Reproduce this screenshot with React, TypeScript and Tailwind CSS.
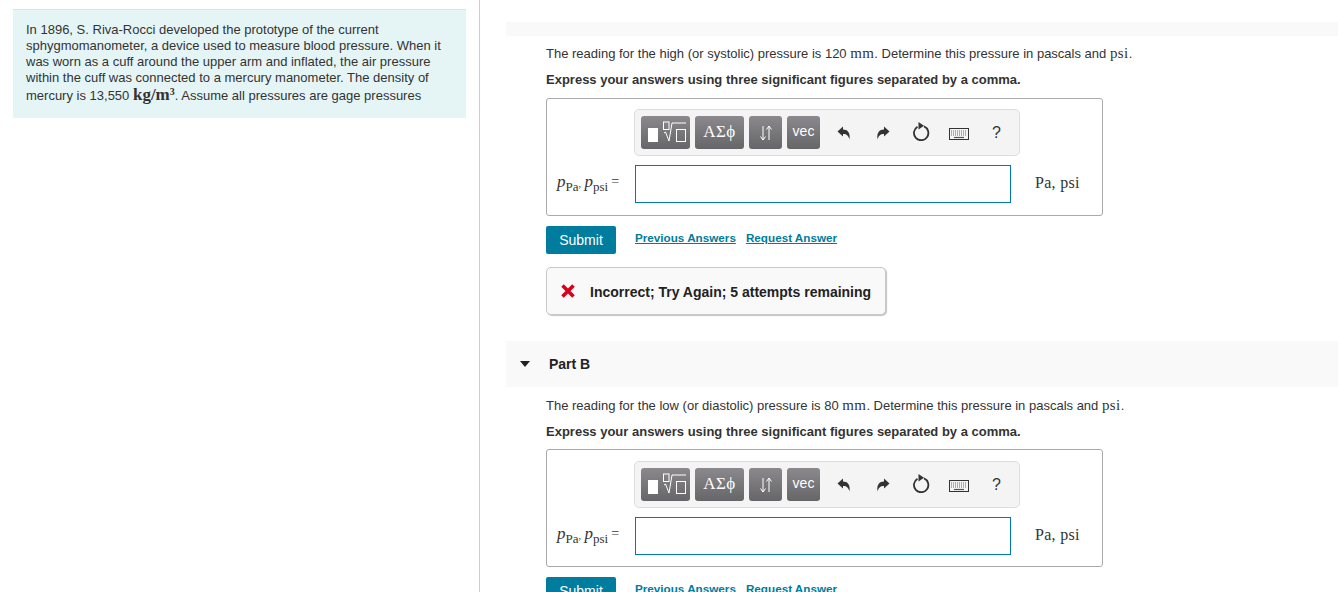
const Toolbar = () => (
  <div className="ml-[87px] w-[386px] h-[47px] bg-[#f4f4f4] border border-[#dddddd] rounded-[5px] flex items-center pl-[6px]">
    <div className="flex gap-[5px]">
      <div className="w-[49px] h-[33px] rounded-[3px] bg-gradient-to-b from-[#8b898d] to-[#666567] relative">
        <span className="absolute left-[7px] top-[12px] w-[10px] h-[14px] bg-white" />
        <svg className="absolute left-[22px] top-[5px]" width="24" height="24" viewBox="0 0 24 24" fill="none" stroke="#ffffff" strokeWidth="1">
          <rect x="0.5" y="1" width="5.5" height="7.5" />
          <path d="M1 12l1.5 -1 3.5 9 3 -18H23" />
          <rect x="13.5" y="8.5" width="9" height="12" />
        </svg>
      </div>
      <div className="w-[49px] h-[33px] rounded-[3px] bg-gradient-to-b from-[#8b898d] to-[#666567] flex items-center justify-center text-white text-[17px] tracking-[0.5px] font-['Liberation_Serif',serif] pb-[2px]">
        ΑΣϕ
      </div>
      <div className="w-[33px] h-[33px] rounded-[3px] bg-gradient-to-b from-[#8b898d] to-[#666567] flex items-center justify-center">
        <svg width="14" height="18" viewBox="0 0 14 18" fill="none" stroke="#ffffff" strokeWidth="1">
          <path d="M4 2v14M1.5 12.5l2.5 3.5 2.5-3.5" />
          <path d="M10 16V2M7.5 5.5l2.5-3.5 2.5 3.5" />
        </svg>
      </div>
      <div className="w-[33px] h-[33px] rounded-[3px] bg-gradient-to-b from-[#8b898d] to-[#666567] flex items-center justify-center text-white text-[14px] pb-[3px]">
        vec
      </div>
    </div>
    <svg className="ml-[17px]" width="14" height="14" viewBox="0 0 14 14" fill="#333333">
      <path d="M0.5 5.5L6 0.5V3.5C10.5 3.5 13.5 6.5 12.5 13.5C11.5 10 10 8 6 8V10.5Z" />
    </svg>
    <svg className="ml-[25px]" width="14" height="14" viewBox="0 0 14 14" fill="#333333">
      <path d="M13.5 5.5L8 0.5V3.5C3.5 3.5 0.5 6.5 1.5 13.5C2.5 10 4 8 8 8V10.5Z" />
    </svg>
    <svg className="ml-[22px] -mt-[3px]" width="18" height="20" viewBox="0 0 18 20" fill="none" stroke="#333333" strokeWidth="1.8">
      <path d="M5.5 5.8A7.2 7.2 0 1 0 12 5.4" />
      <path d="M6.5 1L12 4.8 6.5 8.5Z" fill="#333333" stroke="none" />
    </svg>
    <svg className="ml-[19px] mt-[2px]" width="20" height="12" viewBox="0 0 20 12" fill="none">
      <rect x="0.5" y="0.5" width="19" height="11" fill="#f4f4f4" stroke="#333333" />
      <path d="M2 3h16M2 5h16M2 7h16" stroke="#666666" strokeWidth="1" strokeDasharray="1 1" />
      <path d="M5 9.5h10" stroke="#555555" strokeWidth="1.2" />
    </svg>
    <span className="ml-[23px] text-[#333333] text-[16px]">?</span>
  </div>
);

const AnswerBox = ({ top }: { top: string }) => (
  <div className={`ml-[40px] w-[557px] h-[118px] border border-[#aaaaaa] rounded-[3px] ${top}`}>
    <Toolbar />
    <div className="flex items-center mt-[9px]">
      <div className="w-[88px] pl-[10px] text-[14px] font-['Liberation_Serif',serif] text-[#333333] whitespace-nowrap relative -top-[2px]">
        <i className="text-[17px]">p</i>
        <sub className="text-[13px]">Pa</sub>
        <span className="text-[10px] mr-[1px]">, </span>
        <i className="text-[17px]">p</i>
        <sub className="text-[13px]">psi</sub>
        <span className="ml-[3px] relative -top-[1px]">=</span>
      </div>
      <div className="w-[376px] h-[38px] border border-[#007c9e]" />
      <span className="ml-[24px] text-[16px] tracking-[0.3px] font-['Liberation_Serif',serif] text-[#333333] relative -top-[1px]">Pa, psi</span>
    </div>
  </div>
);

const Actions = () => (
  <div className="flex items-center ml-[40px]">
    <button className="w-[70px] h-[28px] bg-[#007c9e] text-white text-[14px] rounded-[2px]">Submit</button>
    <a className="ml-[19px] text-[11.7px] font-bold text-[#007c9e] underline relative -top-[2px]">Previous Answers</a>
    <a className="ml-[10px] text-[11.7px] font-bold text-[#007c9e] underline relative -top-[2px]">Request Answer</a>
  </div>
);

const MathText = ({ children }: { children: string }) => (
  <span className="font-['Liberation_Serif',serif] text-[15px] tracking-[0.4px]">{children}</span>
);

export default function App() {
  return (
    <div className="w-[1338px] h-[592px] overflow-hidden flex bg-white font-['Liberation_Sans',Arial,sans-serif] text-[#333333]">
      <div className="w-[480px] shrink-0 h-full border-r border-[#c9ced9] pt-[9px] pl-[13px]">
        <div className="w-[453px] h-[109px] bg-[#e5f5f6] border-t border-[#dde3e6] pt-[12px] pl-[13px] pr-[20px] text-[13px] leading-[16px] text-[#333333]">
          <p>
            In 1896, S. Riva-Rocci developed the prototype of the current
            sphygmomanometer, a device used to measure blood pressure. When it
            was worn as a cuff around the upper arm and inflated, the air pressure
            within the cuff was connected to a mercury manometer. The density of
            mercury is 13,550 <span className="font-['Liberation_Serif',serif] text-[17px] leading-[18px] font-bold">kg/m<sup className="text-[10px] leading-[0]">3</sup></span>. Assume all pressures are gage pressures
          </p>
        </div>
      </div>

      <div className="flex-1 pl-[26px] pt-[22px]">
        <div className="h-[14px] bg-[#f9f9f9]" />
        <p className="ml-[40px] mt-[9px] h-[16px] text-[13px] leading-[16px] whitespace-nowrap">
          The reading for the high (or systolic) pressure is 120 <MathText>mm</MathText>. Determine this pressure in pascals and <MathText>psi</MathText>.
        </p>
        <p className="ml-[40px] mt-[11px] h-[16px] text-[13px] leading-[16px] font-bold">
          Express your answers using three significant figures separated by a comma.
        </p>
        <div className="mt-[10px]">
          <AnswerBox top="pt-[10px]" />
        </div>
        <div className="mt-[10px]">
          <Actions />
        </div>
        <div className="ml-[40px] mt-[13px] w-[340px] h-[48px] bg-[#f9f9f9] border border-[#c8c8c8] rounded-[5px] shadow-[1px_1px_1px_#c4c4c4] flex items-center pl-[14px]">
          <svg width="14" height="14" viewBox="0 0 14 14" stroke="#d9001b" strokeWidth="3.6">
            <path d="M1.5 1.5L12.5 12.5M12.5 1.5L1.5 12.5" />
          </svg>
          <span className="ml-[15px] text-[14px] font-bold text-[#222222] relative top-[1px]">Incorrect; Try Again; 5 attempts remaining</span>
        </div>

        <div className="mt-[26px] h-[46px] bg-[#f9f9f9] flex items-center">
          <span className="ml-[14px] w-0 h-0 border-x-[5px] border-x-transparent border-t-[6px] border-t-[#222222]" />
          <span className="ml-[19px] text-[14px] font-bold text-[#222222]">Part B</span>
        </div>
        <p className="ml-[40px] mt-[10px] h-[16px] text-[13px] leading-[16px] whitespace-nowrap">
          The reading for the low (or diastolic) pressure is 80 <MathText>mm</MathText>. Determine this pressure in pascals and <MathText>psi</MathText>.
        </p>
        <p className="ml-[40px] mt-[11px] h-[16px] text-[13px] leading-[16px] font-bold">
          Express your answers using three significant figures separated by a comma.
        </p>
        <div className="mt-[9px]">
          <AnswerBox top="pt-[11px]" />
        </div>
        <div className="mt-[10px]">
          <Actions />
        </div>
      </div>
    </div>
  );
}
